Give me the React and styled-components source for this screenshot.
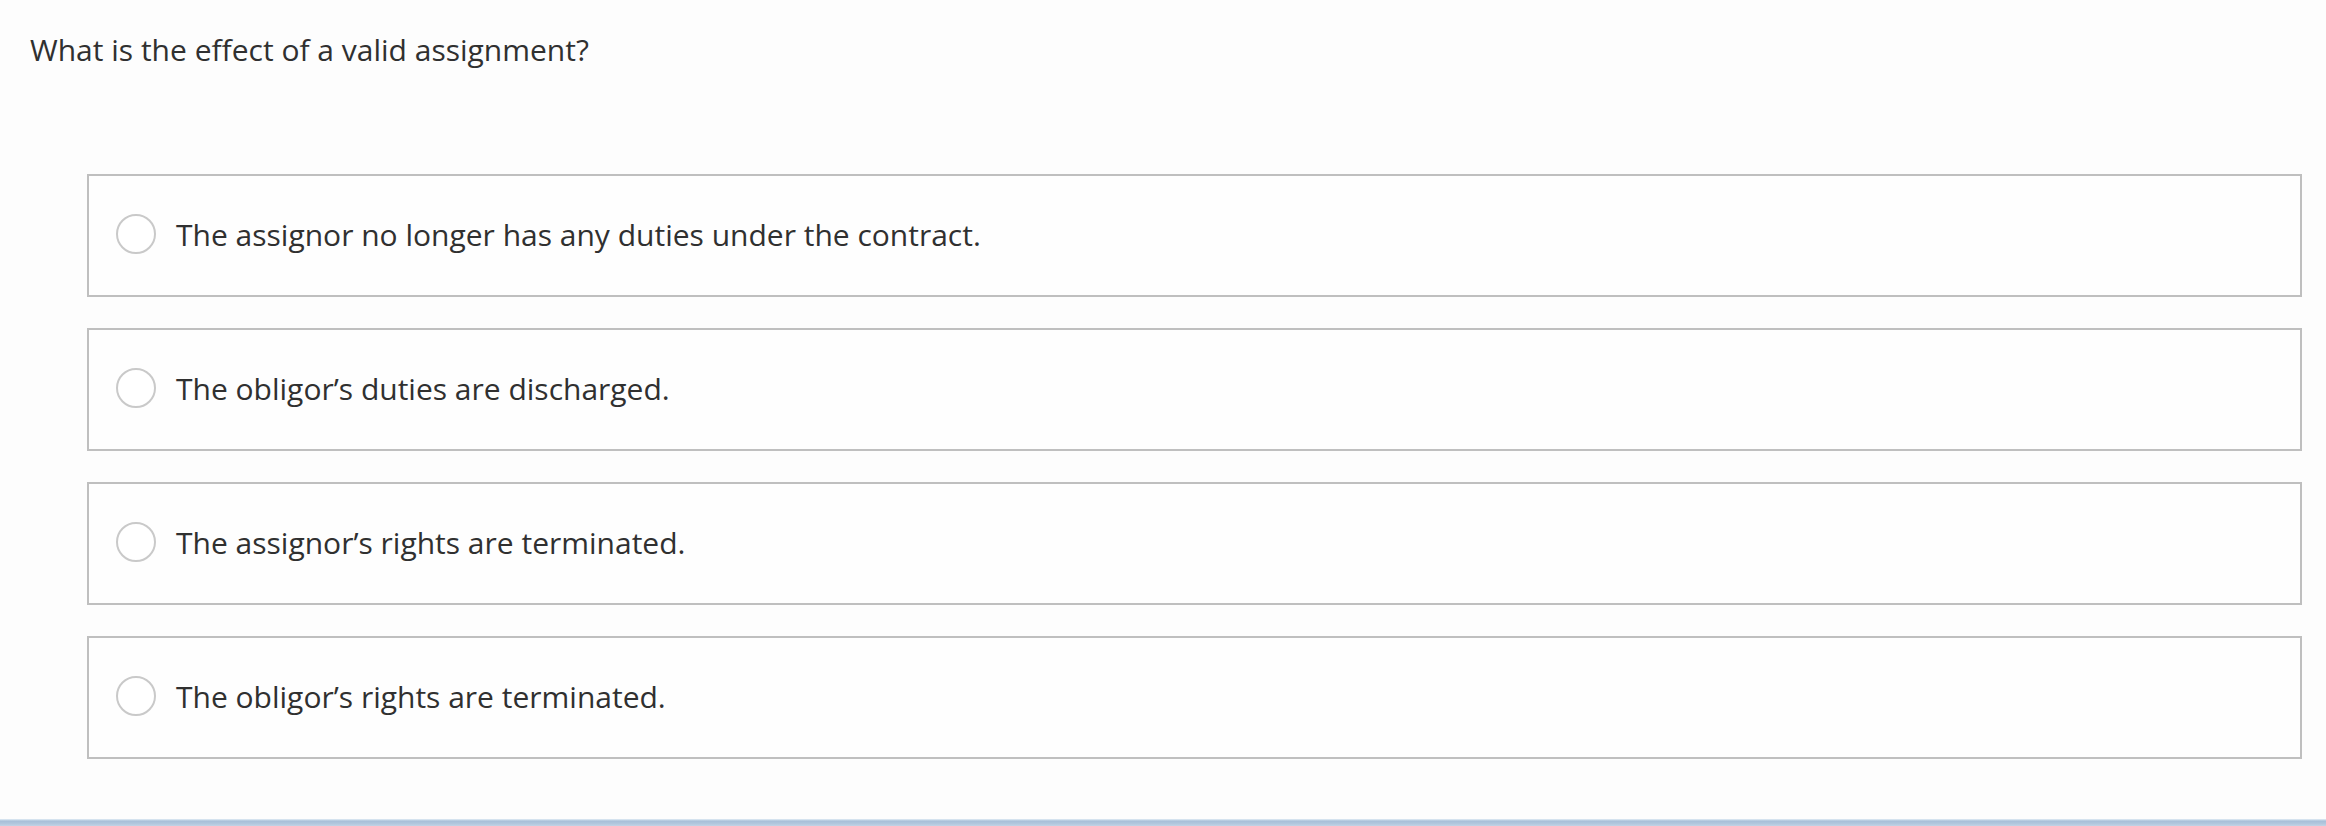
import React from "react";
import styled, { createGlobalStyle } from "styled-components";

const Global = createGlobalStyle`
  html, body { margin: 0; padding: 0; background: #fdfdfd; }
  body { font-family: "Open Sans", "Noto Sans", sans-serif; color: #333; }
  * { box-sizing: border-box; }
`;

const Page = styled.div`
  min-height: 100vh;
  display: flex;
  flex-direction: column;
`;

const Question = styled.div`
  font-size: 30px;
  line-height: 42px;
  color: #303030;
  padding: 29px 0 0 30px;
`;

const OptionList = styled.div`
  display: flex;
  flex-direction: column;
  gap: 31px;
  margin: 103px 24px 0 87px;
`;

const Option = styled.label`
  display: flex;
  align-items: center;
  gap: 20px;
  height: 123px;
  border: 2px solid #bfbfbf;
  padding: 0 0 4px 27px;
  background: #fefefe;
  cursor: pointer;
`;

const Radio = styled.span`
  flex: none;
  width: 40px;
  height: 40px;
  border-radius: 50%;
  border: 2px solid #c9c9c9;
  background: #fff;
`;

const OptionText = styled.span`
  font-size: 30px;
  line-height: 42px;
  color: #303030;
  padding-top: 2px;
`;

const BottomBar = styled.div`
  margin-top: auto;
  height: 7px;
  background: linear-gradient(to bottom, #e4eef6 0%, #a7bfd8 30%, #b3c8de 70%, #c2d4e6 100%);
`;

const options = [
  "The assignor no longer has any duties under the contract.",
  "The obligor\u2019s duties are discharged.",
  "The assignor\u2019s rights are terminated.",
  "The obligor\u2019s rights are terminated.",
];

export default function App() {
  return (
    <Page>
      <Global />
      <Question>What is the effect of a valid assignment?</Question>
      <OptionList>
        {options.map((o) => (
          <Option key={o}>
            <Radio />
            <OptionText>{o}</OptionText>
          </Option>
        ))}
      </OptionList>
      <BottomBar />
    </Page>
  );
}
